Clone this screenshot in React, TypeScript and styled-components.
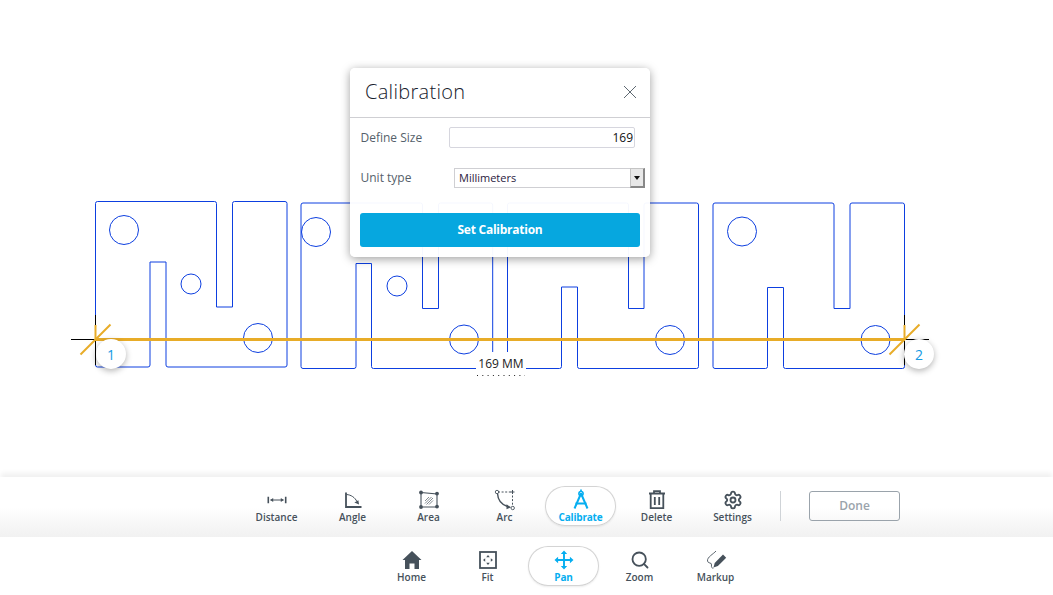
import React from 'react';
import styled, { createGlobalStyle } from 'styled-components';
import { Settings, Search } from 'lucide-react';

const GlobalStyle = createGlobalStyle`
    html, body {
        margin: 0;
        background: #fff;
        font-family: "Open Sans", "Noto Sans", sans-serif;
    }
`;

const Page = styled.div`
    display: flex;
    flex-direction: column;
    width: 1053px;
    height: 595px;
    overflow: hidden;
`;

const Viewer = styled.div`
    position: relative;
    flex: 1;
`;

const Drawing = styled.svg`
    position: absolute;
    left: 0;
    top: 0;
`;

const PointBadge = styled.div<{ $x: number }>`
    position: absolute;
    left: ${p => p.$x - 15}px;
    top: 339px;
    width: 30px;
    height: 30px;
    border-radius: 50%;
    background: #fff;
    box-shadow: 0 2px 6px rgba(0,0,0,0.3);
    color: #149ae4;
    font-size: 14px;
    display: flex;
    align-items: center;
    justify-content: center;
`;

const DimensionLabel = styled.div`
    position: absolute;
    left: 476px;
    top: 352px;
    width: 50px;
    height: 23px;
    background: #fff;
    color: #222;
    font-size: 12px;
    line-height: 24px;
    text-align: center;
    white-space: nowrap;
`;

const Dialog = styled.div`
    position: absolute;
    left: 350px;
    top: 68px;
    width: 300px;
    height: 189px;
    box-sizing: border-box;
    border-radius: 5px;
    background: rgba(255,255,255,0.96);
    box-shadow: 0 2px 10px rgba(0,0,0,0.38);
`;

const DialogHeader = styled.div`
    height: 50px;
    box-sizing: border-box;
    padding: 0 13px 2px 15px;
    border-bottom: 1px solid #cfcfd3;
    display: flex;
    align-items: center;
    justify-content: space-between;
`;

const DialogTitle = styled.div`
    font-size: 20px;
    font-weight: 300;
    letter-spacing: 0.3px;
    color: #16202c;
`;

const CloseIcon = styled.svg`
    width: 14px;
    height: 14px;
    stroke: #5f6972;
    stroke-width: 1;
    fill: none;
`;

const DialogBody = styled.div`
    padding: 9px 10px 0 10.5px;
`;

const FormRow = styled.div<{ $height: number }>`
    display: flex;
    align-items: center;
    height: ${p => p.$height}px;
    margin-bottom: 20px;
`;

const FieldLabel = styled.div<{ $width: number }>`
    width: ${p => p.$width}px;
    flex: none;
    font-size: 12px;
    line-height: 15px;
    padding-bottom: 1px;
    color: #555f6b;
`;

const SizeInput = styled.input`
    width: 186px;
    height: 21px;
    box-sizing: border-box;
    border: 1px solid #d6d6de;
    border-radius: 2px;
    padding: 0 1px 0 0;
    background: #fff;
    color: #111;
    font-family: inherit;
    font-size: 12px;
    text-align: right;
    outline: none;
`;

const UnitSelect = styled.div`
    width: 191px;
    height: 20px;
    box-sizing: border-box;
    border: 1px solid #cfcfd3;
    background: #fff;
    color: #2a2040;
    font-size: 11px;
    line-height: 17px;
    padding-left: 4px;
    position: relative;
    margin-right: -5px;
`;

const SelectArrow = styled.div`
    position: absolute;
    right: -1px;
    top: -1px;
    width: 15px;
    height: 20px;
    box-sizing: border-box;
    background: #e8e8e8;
    border: 1px solid #c4c4c4;
    border-right: 2px solid #888;
    border-bottom: 2px solid #888;
    display: flex;
    align-items: center;
    justify-content: center;
    &::after {
        content: "";
        border-left: 3.5px solid transparent;
        border-right: 3.5px solid transparent;
        border-top: 4px solid #111;
    }
`;

const SetButton = styled.button`
    display: block;
    width: 280px;
    height: 34px;
    margin: 25px 0 0 -0.5px;
    padding: 0 0 2px;
    border: none;
    border-radius: 3px;
    background: #06a7df;
    color: #fff;
    font-family: inherit;
    font-size: 12px;
    font-weight: 700;
    letter-spacing: -0.25px;
`;

const MeasureBar = styled.div`
    height: 60px;
    flex: none;
    box-sizing: border-box;
    padding: 0 0 2px 241px;
    display: flex;
    align-items: center;
    background: linear-gradient(#fff 0%, #fff 50%, #f1f1f1 100%);
    box-shadow: 0 -5px 5px -1px rgba(0,0,0,0.06);
    position: relative;
`;

const NavBar = styled.div`
    height: 58px;
    flex: none;
    box-sizing: border-box;
    padding-left: 376px;
    display: flex;
    align-items: center;
    background: #fff;
`;

const ToolButton = styled.div<{ $active?: boolean }>`
    width: 71px;
    height: 40px;
    flex: none;
    margin-right: 5px;
    box-sizing: border-box;
    border-radius: 20px;
    display: flex;
    flex-direction: column;
    align-items: center;
    justify-content: flex-start;
    padding-top: 3px;
    color: ${p => (p.$active ? '#06aef0' : '#46515b')};
    background: ${p => (p.$active ? '#fff' : 'transparent')};
    box-shadow: ${p => (p.$active ? 'inset 0 0 0 1px #d4d4d4, 0 1px 2px rgba(0,0,0,0.08)' : 'none')};
`;

const ToolIcon = styled.svg`
    width: 22px;
    height: 22px;
    flex: none;
`;

const ToolLabel = styled.span<{ $active?: boolean }>`
    margin-top: 0;
    font-size: 10px;
    line-height: 13px;
    font-weight: ${p => (p.$active ? 700 : 600)};
    letter-spacing: ${p => (p.$active ? '-0.2px' : '0')};
    white-space: nowrap;
`;

const Divider = styled.div`
    width: 1px;
    height: 30px;
    margin: 0 28px 0 7px;
    background: #cfd3d7;
`;

const DoneButton = styled.button`
    width: 91px;
    height: 30px;
    box-sizing: border-box;
    padding: 0 0 2px;
    border: 1px solid #9aa3ab;
    border-radius: 3px;
    background: transparent;
    color: #9aa3ab;
    font-family: inherit;
    font-size: 12px;
    font-weight: 600;
`;

type Pt = [number, number, number?];

// rounds only the vertices that carry a radius, slots keep their square ends
const outline = (pts: Pt[]) => {
    const n = pts.length;
    let d = '';
    pts.forEach((p, i) => {
        const r = p[2] || 0;
        const prev = pts[(i + n - 1) % n];
        const next = pts[(i + 1) % n];
        const toward = (a: Pt, b: Pt) => {
            const len = Math.hypot(b[0] - a[0], b[1] - a[1]);
            return [a[0] + ((b[0] - a[0]) / len) * r, a[1] + ((b[1] - a[1]) / len) * r];
        };
        const a = toward(p, prev);
        const b = toward(p, next);
        d += `${i === 0 ? 'M' : 'L'}${a[0]} ${a[1]} Q${p[0]} ${p[1]} ${b[0]} ${b[1]} `;
    });
    return d + 'Z';
};

const shapes: Pt[][] = [
    [[95.5, 201.5, 2], [216.5, 201.5, 2], [216.5, 307], [232.5, 307], [232.5, 201.5, 2], [287, 201.5, 2], [287, 367, 2], [166, 367, 2], [166, 262], [150, 262], [150, 367, 2], [95.5, 367, 2]],
    [[301, 203, 2], [422.5, 203, 2], [422.5, 308.5], [438.5, 308.5], [438.5, 203, 2], [492.7, 203, 2], [492.7, 368.5, 2], [371.5, 368.5, 2], [371.5, 263.5], [356, 263.5], [356, 368.5, 2], [301, 368.5, 2]],
    [[507.5, 203, 2], [628.5, 203, 2], [628.5, 308.5], [644, 308.5], [644, 203, 2], [698.5, 203, 2], [698.5, 368.5, 2], [577.5, 368.5, 2], [577.5, 287], [561.5, 287], [561.5, 368.5, 2], [507.5, 368.5, 2]],
    [[713, 203, 2], [834, 203, 2], [834, 308.5], [850, 308.5], [850, 203, 2], [904.5, 203, 2], [904.5, 368.5, 2], [783.5, 368.5, 2], [783.5, 287.5], [767.5, 287.5], [767.5, 368.5, 2], [713, 368.5, 2]],
];

const holes = [
    [124, 230, 14.5], [191, 284, 10], [258, 338, 14.5],
    [316, 232, 14.5], [397, 286, 10], [464, 339.5, 14.5],
    [670, 340, 14.5],
    [742, 231.5, 14.5], [875.5, 340, 14.5],
];

const Part = () => (
    <g fill="none" stroke="#0d3fe0" strokeWidth="1">
        {shapes.map((s, i) => <path key={i} d={outline(s)} />)}
        {holes.map((h, i) => <circle key={i} cx={h[0]} cy={h[1]} r={h[2]} />)}
    </g>
);

const Crosshair = ({ x, dir }: { x: number; dir: 1 | -1 }) => (
    <g fill="none">
        <path d={`M${x} 315V365`} stroke="#000" strokeWidth="1" />
        <path d={dir === 1 ? `M${x - 24.5} 339.5H${x}` : `M${x} 339.5H${x + 24.5}`} stroke="#000" strokeWidth="1" />
        <path d={`M${x} 325V340`} stroke="#e8ac28" strokeWidth="2" />
        <path d={`M${x - 15} 354.5L${x + 15} 324.5`} stroke="#e8ac28" strokeWidth="2" />
    </g>
);

const DistanceIcon = () => (
    <ToolIcon viewBox="0 0 22 22">
        <path d="M1.5 7.7h1.6v6.6H1.5zM18.9 7.7h1.6v6.6h-1.6z" fill="currentColor" />
        <path d="M4.5 11h13" stroke="currentColor" strokeWidth="1" />
        <path d="M4.2 11l3-2v4zM17.8 11l-3-2v4z" fill="currentColor" />
    </ToolIcon>
);

const AngleIcon = () => (
    <ToolIcon viewBox="0 0 22 22">
        <path d="M4 3.5V18H19.5" fill="none" stroke="currentColor" strokeWidth="1.8" />
        <path d="M4.5 5.5c4.5.3 8.5 3 10.4 7" fill="none" stroke="currentColor" strokeWidth="1" />
        <path d="M17 15.5l-4.6-2 4-2.2z" fill="currentColor" />
    </ToolIcon>
);

const AreaIcon = () => (
    <ToolIcon viewBox="0 0 22 22">
        <path d="M3 3.5L19 5V18H3Z" fill="none" stroke="currentColor" strokeWidth="1.1" />
        <g fill="currentColor">
            <circle cx="3" cy="3.5" r="1.9" />
            <circle cx="19" cy="4.6" r="1.9" />
            <circle cx="3" cy="18" r="1.9" />
            <circle cx="19" cy="17.6" r="1.9" />
        </g>
        <path d="M7 12l4-4M7 14.5l6.5-6.5M8.5 15.5l6.5-6.5M11 15.5l4-4" stroke="currentColor" strokeWidth="0.9" opacity="0.75" />
    </ToolIcon>
);

const ArcIcon = () => (
    <ToolIcon viewBox="0 0 22 22">
        <path d="M4 3H18.5V18" fill="none" stroke="currentColor" strokeWidth="1" strokeDasharray="2 1.6" />
        <path d="M18.5 1v4M16.5 3h4" stroke="currentColor" strokeWidth="1" />
        <path d="M3.5 4.5c.3 6 4 11 10 13" fill="none" stroke="currentColor" strokeWidth="1.4" />
        <path d="M17 18.3l-4.5 2v-5z" fill="currentColor" />
        <circle cx="3" cy="3" r="1.7" fill="#fff" stroke="currentColor" strokeWidth="0.9" />
        <circle cx="18.7" cy="19" r="1.7" fill="#fff" stroke="currentColor" strokeWidth="0.9" />
    </ToolIcon>
);

const CalibrateIcon = () => (
    <ToolIcon viewBox="0 0 22 22">
        <path d="M11 4.5L4.5 19.5M11 4.5L17.5 19.5" fill="none" stroke="currentColor" strokeWidth="2" />
        <circle cx="11" cy="4.6" r="2.1" fill="none" stroke="currentColor" strokeWidth="1.6" />
        <path d="M11 .6v2" stroke="currentColor" strokeWidth="1.7" />
        <path d="M5.5 14.5H16.5" stroke="currentColor" strokeWidth="2" />
    </ToolIcon>
);

const DeleteIcon = () => (
    <ToolIcon viewBox="0 0 22 22">
        <path d="M3 4.5H19M8 4.5V2.2H14V4.5" fill="none" stroke="currentColor" strokeWidth="1.8" />
        <path d="M4.7 4.5V19.2H17.3V4.5" fill="none" stroke="currentColor" strokeWidth="1.8" />
        <path d="M8.8 8V16M13.2 8V16" stroke="currentColor" strokeWidth="1.8" />
    </ToolIcon>
);

const HomeIcon = () => (
    <ToolIcon viewBox="0 0 22 22">
        <path d="M11 2L20.5 11H18V20H13.5V14.5H8.5V20H4V11H1.5Z" fill="currentColor" />
    </ToolIcon>
);

const FitIcon = () => (
    <ToolIcon viewBox="0 0 22 22">
        <rect x="3" y="3" width="16" height="16" fill="none" stroke="currentColor" strokeWidth="1.8" />
        <path d="M11 6l1.8 2.2h-3.6zM11 16l1.8-2.2h-3.6zM6 11l2.2-1.8v3.6zM16 11l-2.2-1.8v3.6z" fill="currentColor" />
    </ToolIcon>
);

const PanIcon = () => (
    <ToolIcon viewBox="0 0 22 22">
        <path d="M11 4V18M4 11H18" stroke="currentColor" strokeWidth="1.9" />
        <path d="M11 1.5l3.2 3.6H7.8zM11 20.5l3.2-3.6H7.8zM1.5 11l3.6-3.2v6.4zM20.5 11l-3.6-3.2v6.4z" fill="currentColor" />
    </ToolIcon>
);

const MarkupIcon = () => (
    <ToolIcon viewBox="0 0 22 22">
        <path d="M8.5 18.5l1.2-4.6L18 5.6l3.2 3.2-8.3 8.3z" fill="currentColor" />
        <path d="M11 2C8.5 5 2 8 2.500 12 3 15 7 13 6.500 16c-.3 2 .2 3.500 2 3" fill="none" stroke="currentColor" strokeWidth="0.9" />
    </ToolIcon>
);

const measureTools = [
    { label: 'Distance', icon: <DistanceIcon /> },
    { label: 'Angle', icon: <AngleIcon /> },
    { label: 'Area', icon: <AreaIcon /> },
    { label: 'Arc', icon: <ArcIcon /> },
    { label: 'Calibrate', icon: <CalibrateIcon />, active: true },
    { label: 'Delete', icon: <DeleteIcon /> },
    { label: 'Settings', icon: <Settings size={20} strokeWidth={2.2} style={{ margin: 1, flex: 'none' }} /> },
];

const navTools = [
    { label: 'Home', icon: <HomeIcon /> },
    { label: 'Fit', icon: <FitIcon /> },
    { label: 'Pan', icon: <PanIcon />, active: true },
    { label: 'Zoom', icon: <Search size={20} strokeWidth={2.2} style={{ margin: 1, flex: 'none' }} /> },
    { label: 'Markup', icon: <MarkupIcon /> },
];

export default function App() {
    return <Page>
        <GlobalStyle />
        <Viewer>
            <Drawing width="1053" height="477" viewBox="0 0 1053 477">
                <Part />
                <Crosshair x={95.5} dir={1} />
                <Crosshair x={904.5} dir={-1} />
                <path d="M95 339.5H905" stroke="#e8ac28" strokeWidth="3" />
            </Drawing>
            <PointBadge $x={111}>1</PointBadge>
            <PointBadge $x={919}>2</PointBadge>
            <DimensionLabel>169 MM</DimensionLabel>
            <Drawing width="1053" height="477" viewBox="0 0 1053 477">
                <path d="M477 375.5H525" stroke="#222" strokeWidth="1" strokeDasharray="1 4.3" />
            </Drawing>
            <Dialog>
                <DialogHeader>
                    <DialogTitle>Calibration</DialogTitle>
                    <CloseIcon viewBox="0 0 14 14"><path d="M1 1L13 13M13 1L1 13" /></CloseIcon>
                </DialogHeader>
                <DialogBody>
                    <FormRow $height={21}>
                        <FieldLabel $width={88.5}>Define Size</FieldLabel>
                        <SizeInput value="169" readOnly />
                    </FormRow>
                    <FormRow $height={20}>
                        <FieldLabel $width={93.5}>Unit type</FieldLabel>
                        <UnitSelect>Millimeters<SelectArrow /></UnitSelect>
                    </FormRow>
                    <SetButton>Set Calibration</SetButton>
                </DialogBody>
            </Dialog>
        </Viewer>
        <MeasureBar>
            {measureTools.map(t => (
                <ToolButton key={t.label} $active={t.active}>
                    {t.icon}
                    <ToolLabel $active={t.active}>{t.label}</ToolLabel>
                </ToolButton>
            ))}
            <Divider />
            <DoneButton>Done</DoneButton>
        </MeasureBar>
        <NavBar>
            {navTools.map(t => (
                <ToolButton key={t.label} $active={t.active}>
                    {t.icon}
                    <ToolLabel $active={t.active}>{t.label}</ToolLabel>
                </ToolButton>
            ))}
        </NavBar>
    </Page>;
}
